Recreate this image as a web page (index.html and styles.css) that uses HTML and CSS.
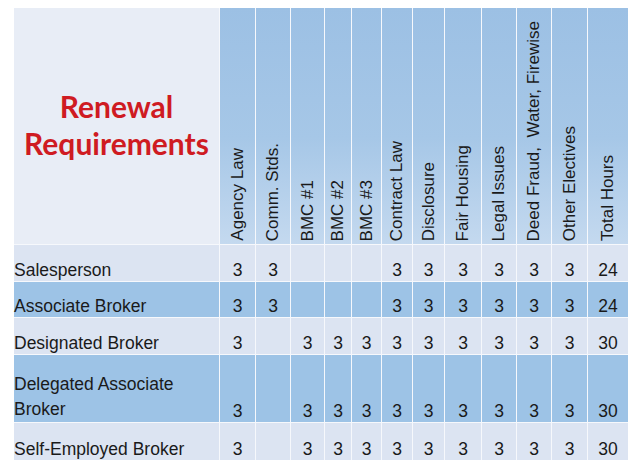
FILE: index.html
```html
<!DOCTYPE html>
<html>
<head>
<meta charset="utf-8">
<link rel="stylesheet" href="styles.css">
</head>
<body>
<div class="grid">
  <div class="corner"><div class="title">Renewal<br>Requirements</div></div>
  <div class="hd"><span>Agency Law</span></div>
  <div class="hd"><span>Comm. Stds.</span></div>
  <div class="hd"><span>BMC #1</span></div>
  <div class="hd"><span>BMC #2</span></div>
  <div class="hd"><span>BMC #3</span></div>
  <div class="hd"><span>Contract Law</span></div>
  <div class="hd"><span>Disclosure</span></div>
  <div class="hd"><span>Fair Housing</span></div>
  <div class="hd"><span>Legal Issues</span></div>
  <div class="hd"><span>Deed Fraud,&nbsp; Water, Firewise</span></div>
  <div class="hd"><span>Other Electives</span></div>
  <div class="hd"><span>Total Hours</span></div>

  <div class="c lbl lt">Salesperson</div>
  <div class="c lt">3</div><div class="c lt">3</div><div class="c lt"></div><div class="c lt"></div><div class="c lt"></div>
  <div class="c lt">3</div><div class="c lt">3</div><div class="c lt">3</div><div class="c lt">3</div><div class="c lt">3</div><div class="c lt">3</div><div class="c lt">24</div>

  <div class="c lbl dk">Associate Broker</div>
  <div class="c dk">3</div><div class="c dk">3</div><div class="c dk"></div><div class="c dk"></div><div class="c dk"></div>
  <div class="c dk">3</div><div class="c dk">3</div><div class="c dk">3</div><div class="c dk">3</div><div class="c dk">3</div><div class="c dk">3</div><div class="c dk">24</div>

  <div class="c lbl lt">Designated Broker</div>
  <div class="c lt">3</div><div class="c lt"></div><div class="c lt">3</div><div class="c lt">3</div><div class="c lt">3</div>
  <div class="c lt">3</div><div class="c lt">3</div><div class="c lt">3</div><div class="c lt">3</div><div class="c lt">3</div><div class="c lt">3</div><div class="c lt">30</div>

  <div class="c lbl dk two">Delegated Associate Broker</div>
  <div class="c dk">3</div><div class="c dk"></div><div class="c dk">3</div><div class="c dk">3</div><div class="c dk">3</div>
  <div class="c dk">3</div><div class="c dk">3</div><div class="c dk">3</div><div class="c dk">3</div><div class="c dk">3</div><div class="c dk">3</div><div class="c dk">30</div>

  <div class="c lbl lt">Self-Employed Broker</div>
  <div class="c lt">3</div><div class="c lt"></div><div class="c lt">3</div><div class="c lt">3</div><div class="c lt">3</div>
  <div class="c lt">3</div><div class="c lt">3</div><div class="c lt">3</div><div class="c lt">3</div><div class="c lt">3</div><div class="c lt">3</div><div class="c lt">30</div>
</div>
</body>
</html>
```
FILE: styles.css
```css
html, body {
  margin: 0;
  padding: 0;
  background: #ffffff;
}
.grid {
  margin: 8px 0 0 14px;
  width: 614px;
  display: grid;
  grid-template-columns: 205px 35px 34px 33px 26px 29px 30px 31px 36px 34px 34px 35px 40px;
  grid-template-rows: 236px 36px 35px 36px 67px 37px;
  gap: 1px;
  background: #f6f8fc;
  font-family: "Liberation Sans", Arial, sans-serif;
  color: #1a1a1a;
}
.corner {
  background: #e8edf6;
  display: flex;
  align-items: flex-start;
  justify-content: center;
  padding-top: 80px;
}
.title {
  font-family: Lato, "Open Sans", sans-serif;
  font-weight: 700;
  font-size: 30px;
  line-height: 37px;
  color: #cf1b22;
  text-align: center;
}
.hd {
  background: linear-gradient(#9cc0e4 0%, #a6c7e7 55%, #c4d9ef 100%);
  display: flex;
  align-items: flex-end;
  justify-content: center;
  padding-bottom: 3px;
}
.hd span {
  writing-mode: vertical-rl;
  transform: rotate(180deg);
  font-size: 17px;
  line-height: 20px;
  white-space: nowrap;
}
.c {
  display: flex;
  align-items: flex-end;
  justify-content: center;
  font-size: 17.5px;
  line-height: 22px;
}
.lbl {
  justify-content: flex-start;
}
.two {
  line-height: 25px;
}
.lt { background: #dce4f2; }
.dk { background: #9dc3e6; }
```
